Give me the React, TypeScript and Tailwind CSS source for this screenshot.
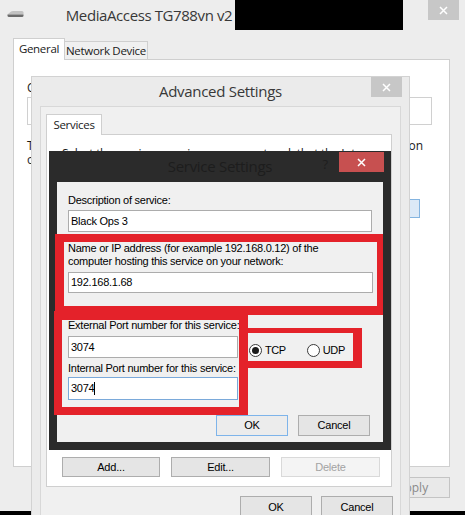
import React from "react";

const UI = "font-['Open_Sans','Noto_Sans',sans-serif]";
const MS = "font-['Liberation_Sans',Arial,sans-serif]";

function CloseX() {
  return (
    <svg width="9" height="9" viewBox="0 0 9 9">
      <path d="M1 1L8 8M8 1L1 8" stroke="white" strokeWidth="1.5" />
    </svg>
  );
}

function DeviceIcon() {
  return (
    <svg width="17" height="8" viewBox="0 0 17 8">
      <path d="M0.5 4.5 L4 1.5 Q5 1 6 1 L15 1 Q16.5 1 16.5 2.5 L16.5 4.5 Z" fill="#c2c2c2" />
      <path d="M0.5 4.5 L16.5 4.5 L16.5 5.5 Q16.5 7 15 7 L2 7 Q0.5 7 0.5 5.5 Z" fill="#6b6b6b" />
    </svg>
  );
}

function WinButton({
  label,
  w,
  h = 20,
  variant = "normal",
}: {
  label: string;
  w: number;
  h?: number;
  variant?: "normal" | "default" | "disabled";
}) {
  const cls =
    variant === "default"
      ? "bg-[#ececec] border-[#7eb4ea] text-black"
      : variant === "disabled"
      ? "bg-[#f4f4f4] border-[#d9d9d9] text-[#a3a3a3]"
      : "bg-[#e5e5e5] border-[#adadad] text-black";
  return (
    <div
      className={`flex items-center justify-center border text-[11px] tracking-[-0.2px] ${MS} ${cls}`}
      style={{ width: w, height: h }}
    >
      {label}
    </div>
  );
}

function Radio({ checked, label }: { checked: boolean; label: string }) {
  return (
    <div className="flex items-center">
      <span className="w-[13px] h-[13px] rounded-full border border-[#3a3a3a] bg-white flex items-center justify-center">
        {checked && <span className="w-[7px] h-[7px] rounded-full bg-[#1a1a1a]" />}
      </span>
      <span className={`ml-[3px] text-[11px] tracking-[-0.4px] text-black ${MS}`}>{label}</span>
    </div>
  );
}

export default function App() {
  return (
    <div className="relative w-[465px] h-[515px] overflow-hidden bg-black">
      {/* Outer property window */}
      <div className="absolute left-0 top-0 w-[465px] h-[511px] bg-[#ededed] flex flex-col">
        <div className="h-[30px] shrink-0 grid grid-cols-[1fr_auto_1fr]">
          <div className="flex items-start pl-[7px] pt-[10px]">
            <DeviceIcon />
          </div>
          <div className="flex items-stretch gap-[3px] ml-[4px]">
            <span className={`self-center pb-[1px] text-[15px] leading-[20px] tracking-[-0.4px] text-[#383838] ${UI}`}>
              MediaAccess TG788vn v2
            </span>
            <span className="w-[168px] bg-black" />
          </div>
          <div className="flex justify-end items-start pr-[6px]">
            <div className="w-[31px] h-[20px] bg-[#c7c7c7] flex items-center justify-center">
              <CloseX />
            </div>
          </div>
        </div>

        <div className="flex flex-col pl-[13px] pr-[15px] pt-[8px]">
          <div className="flex items-end h-[21px]">
            <div
              className={`relative z-10 -mb-px h-[22px] w-[52px] bg-white border border-b-0 border-[#cfcfcf] flex items-center justify-center pb-[1px] text-[11.5px] tracking-[-0.3px] text-[#1a1a1a] ${UI}`}
            >
              General
            </div>
            <div
              className={`h-[18px] w-[83px] bg-[#f0f0f0] border-t border-r border-[#cfcfcf] flex items-center justify-center text-[11.5px] tracking-[-0.3px] text-[#1a1a1a] ${UI}`}
            >
              Network Device
            </div>
          </div>
          <div className={`h-[408px] bg-white border border-[#cfcfcf] pl-[13px] pt-[20px] flex flex-col text-[#1a1a1a] ${UI}`}>
            <div className="text-[12px] leading-[16px]">Connection details:</div>
            <div className="mt-[1px] w-[405px] h-[28px] border border-[#d0d0d0] bg-white" />
            <div className="mt-[14px] w-[396px] text-[12px] leading-[14px]">
              <div className="flex justify-between">
                <span>To share</span>
                <span>configuration</span>
              </div>
              <div>of it.</div>
            </div>
            <div className="mt-[32px] w-[393px] flex justify-end">
              <div className="w-[75px] h-[19px] bg-[#dce9f7] border border-[#84b4e0]" />
            </div>
          </div>
          <div className="mt-[10px] self-end">
            <div
              className={`w-[75px] h-[21px] bg-[#e9e9e9] border border-[#c4c4c4] flex items-center justify-center text-[12px] text-[#8a8a8a] ${UI}`}
            >
              Apply
            </div>
          </div>
        </div>
      </div>

      {/* Advanced Settings window */}
      <div className="absolute left-[32px] top-[77px] w-[377px] h-[450px] bg-[#ebebeb] shadow-[0_0_0_1px_#d2d2d2] flex flex-col">
        <div className="h-[29px] shrink-0 grid grid-cols-[1fr_auto_1fr]">
          <div />
          <div className={`self-center pb-[1px] text-[15px] leading-[20px] tracking-[-0.3px] text-[#383838] ${UI}`}>
            Advanced Settings
          </div>
          <div className="flex justify-end items-start pr-[7px]">
            <div className="w-[31px] h-[20px] bg-[#c7c7c7] flex items-center justify-center">
              <CloseX />
            </div>
          </div>
        </div>
        <div className="mx-[8px] flex-1 bg-[#f0f0f0] border border-[#d8d8d8] pl-[5px] pt-[7px] flex flex-col">
          <div className="flex items-end h-[20px]">
            <div
              className={`relative z-10 -mb-px h-[21px] w-[56px] bg-white border border-b-0 border-[#cfcfcf] flex items-center justify-center pb-[1px] text-[11.5px] tracking-[-0.3px] text-[#1a1a1a] ${UI}`}
            >
              Services
            </div>
          </div>
          <div className="w-[346px] h-[353px] bg-white border border-[#cfcfcf] pl-[15px] pt-[11px] pb-[9px] flex flex-col overflow-hidden">
            <div className={`w-[312px] h-[16px] overflow-hidden whitespace-nowrap text-[12px] leading-[16px] tracking-[-0.3px] text-[#1a1a1a] ${UI}`}>
              Select the services running on your network that the Internet users can access:
            </div>
            <div className="mt-auto flex gap-[11px]">
              <WinButton label="Add..." w={98} />
              <WinButton label="Edit..." w={99} />
              <WinButton label="Delete" w={99} variant="disabled" />
            </div>
          </div>
          <div className="mt-[9px] w-[347px] flex justify-end gap-[9px]">
            <WinButton label="OK" w={72} h={22} />
            <WinButton label="Cancel" w={72} h={22} />
          </div>
        </div>
      </div>

      {/* Service Settings window */}
      <div className="absolute left-[49px] top-[151px] w-[342px] h-[299px] bg-[#2b2b2b] flex flex-col">
        <div className="h-[31px] shrink-0 grid grid-cols-[1fr_auto_1fr]">
          <div />
          <div className={`self-center pb-[1px] text-[15px] leading-[20px] tracking-[-0.3px] text-[#1d1d1d] ${UI}`}>
            Service Settings
          </div>
          <div className="flex justify-end items-start pt-[1px] pr-[7px] gap-[11px]">
            <span className={`mt-[4px] text-[13px] leading-[16px] text-[#1e1e1e] ${UI}`}>?</span>
            <div className="w-[45px] h-[20px] bg-[#c75050] flex items-center justify-center">
              <CloseX />
            </div>
          </div>
        </div>
        <div className={`mx-[8px] mb-[8px] flex-1 bg-[#f0f0f0] pl-[11px] pt-[11px] flex flex-col items-start text-[11px] tracking-[-0.25px] text-black ${MS}`}>
          <div className="leading-[14px]">Description of service:</div>
          <div className="mt-[3px] w-[304px] h-[22px] bg-white border border-[#acacac] flex items-center pl-[2px]">
            Black Ops 3
          </div>
          <div className="mt-[10px] leading-[13px]">
            <div>Name or IP address (for example 192.168.0.12) of the</div>
            <div>computer hosting this service on your network:</div>
          </div>
          <div className="mt-[4px] w-[305px] h-[21px] bg-white border border-[#acacac] flex items-center pl-[2px]">
            192.168.1.68
          </div>
          <div className="mt-[25px] flex items-start">
            <div className="w-[170px] flex flex-col">
              <div className="leading-[14px] whitespace-nowrap">External Port number for this service:</div>
              <div className="mt-[4px] w-[170px] h-[22px] bg-white border border-[#acacac] flex items-center pl-[2px]">
                3074
              </div>
              <div className="mt-[3px] leading-[14px] whitespace-nowrap">Internal Port number for this service:</div>
              <div className="mt-[2px] w-[170px] h-[23px] bg-white border border-[#7aa9da] flex items-center pl-[2px]">
                <span>3074</span>
                <span className="w-px h-[13px] bg-black" />
              </div>
            </div>
            <div className="ml-[11px] mt-[24px] flex items-center gap-[21px]">
              <Radio checked label="TCP" />
              <Radio checked={false} label="UDP" />
            </div>
          </div>
          <div className="mt-[15px] w-[302px] flex justify-end gap-[10px]">
            <WinButton label="OK" w={72} h={21} variant="default" />
            <WinButton label="Cancel" w={72} h={21} />
          </div>
        </div>
      </div>

      {/* Red annotation boxes */}
      <div className="absolute left-[55px] top-[234px] w-[328px] h-[81px] border-l-[9px] border-t-[8px] border-r-[6px] border-b-[9px] border-[#e4222a] pointer-events-none" />
      <div className="absolute left-[54px] top-[311px] w-[194px] h-[104px] border-l-[8px] border-t-[9px] border-r-[9px] border-b-[8px] border-[#e4222a] pointer-events-none" />
      <div className="absolute left-[240px] top-[328px] w-[122px] h-[40px] border-l-[8px] border-t-[5px] border-r-[9px] border-b-[7px] border-[#e4222a] pointer-events-none" />
    </div>
  );
}
